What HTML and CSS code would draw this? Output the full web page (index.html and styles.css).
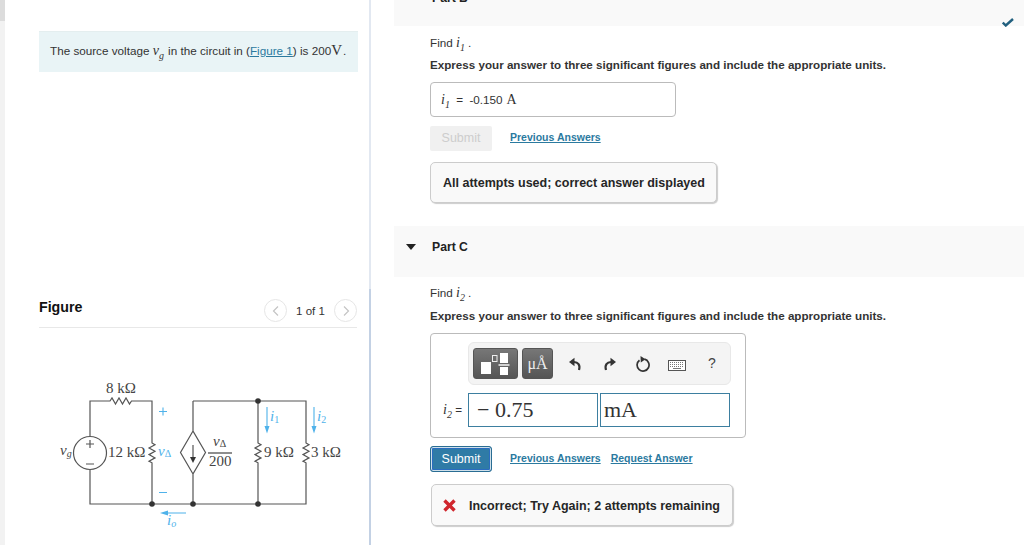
FILE: index.html
```html
<!DOCTYPE html>
<html lang="en">
<head>
<meta charset="utf-8">
<title>Circuit problem</title>
<link rel="stylesheet" href="styles.css">
</head>
<body>
<div class="page">
  <div class="strip"><div class="thumb"></div></div>
  <section class="left">
    <div class="intro">The source voltage <i class="m m-gap">v<sub>g</sub></i> in the circuit in (<a href="#">Figure 1</a>) is 200<span class="mr">V</span>.</div>
    <div class="fig-head">
      <h2>Figure</h2>
      <div class="pager">
        <span class="circle"><svg width="10" height="12" viewBox="0 0 10 12"><path d="M7 1.500 2.500 6 7 10.500" fill="none" stroke="#c4c4c4" stroke-width="1.200"/></svg></span>
        <span class="count">1 of 1</span>
        <span class="circle"><svg width="10" height="12" viewBox="0 0 10 12"><path d="M3 1.500 7.500 6 3 10.500" fill="none" stroke="#c4c4c4" stroke-width="1.200"/></svg></span>
      </div>
    </div>
    <svg class="circuit" width="310" height="175" viewBox="50 370 310 175">
      <g fill="none" stroke="#555" stroke-width="1.200">
        <path d="M90 436V401H110l2-3 3.500 6 3.500-6 3.500 6 3.500-6 3.500 6 2-3H152V443l3 1.700-6 3.300 6 3.300-6 3.300 6 3.300-6 3.300 3 1.600V504H90V470"/>
        <circle cx="90" cy="453" r="16.500"/>
        <path d="M193 401H306V443l3 1.700-6 3.300 6 3.300-6 3.300 6 3.300-6 3.300 3 1.600V504H152"/>
        <path d="M193 401V431L205.500 452.500 193 474V504M193 431 180.500 452.500 193 474"/>
        <path d="M258 401V443l3 1.700-6 3.300 6 3.300-6 3.300 6 3.300-6 3.300 3 1.600V504"/>
        <path d="M193 445V458"/>
        <path d="M208 453H232" stroke="#444"/>
        <path d="M86 444h8M90 440v8M86 464h8"/>
      </g>
      <path d="M190 457h6l-3 6z" fill="#333"/>
      <g fill="#333"><circle cx="152" cy="504" r="2.800"/><circle cx="193" cy="504" r="2.800"/><circle cx="258" cy="401" r="2.800"/><circle cx="258" cy="504" r="2.800"/></g>
      <g stroke="#4fb2ea" stroke-width="1.100" fill="none">
        <path d="M159 411.500h8M163 407.500v8M159 492.500h8M167 513h19M267 407v20M314 407v20"/>
      </g>
      <g fill="#4fb2ea">
        <path d="M160 513l8-2.500v5zM264.500 426h5l-2.500 7.500zM311.500 426h5l-2.500 7.500z"/>
      </g>
      <g class="ck">
        <text x="106" y="393">8 kΩ</text>
        <text x="108" y="457">12 kΩ</text>
        <text x="264" y="457">9 kΩ</text>
        <text x="311" y="457">3 kΩ</text>
        <text x="209" y="466">200</text>
        <text x="60" y="455" font-style="italic">v<tspan class="ck-sub" dy="2">g</tspan></text>
        <text x="213" y="446" font-style="italic">v<tspan class="ck-sub" dy="1" font-style="normal">Δ</tspan></text>
      </g>
      <g class="ck ck-blue">
        <text x="158" y="456" font-style="italic">v<tspan class="ck-sub" dy="1" font-style="normal">Δ</tspan></text>
        <text x="167" y="525" font-style="italic">i<tspan class="ck-sub" dy="2">o</tspan></text>
        <text x="270" y="421" font-style="italic">i<tspan class="ck-sub" dy="2" font-style="normal">1</tspan></text>
        <text x="317" y="421" font-style="italic">i<tspan class="ck-sub" dy="2" font-style="normal">2</tspan></text>
      </g>
    </svg>
  </section>
  <main class="right">
    <div class="band band-cut">
      <span class="caret-space"></span><h3>Part B</h3>
      <svg class="tick" width="12" height="9" viewBox="0 0 12 9"><path d="M.8 4.500l3 3L11 1" fill="none" stroke="#21607f" stroke-width="2.400"/></svg>
    </div>
    <div class="part part-b">
      <p class="find">Find <i class="m">i<sub>1</sub></i> .</p>
      <p class="express">Express your answer to three significant figures and include the appropriate units.</p>
      <div class="given"><i class="m">i<sub>1</sub></i> =  -0.150<span class="mr">A</span></div>
      <div class="actions">
        <span class="btn btn-off">Submit</span>
        <a class="link" href="#">Previous Answers</a>
      </div>
      <div class="note note-plain">All attempts used; correct answer displayed</div>
    </div>
    <div class="band">
      <svg class="caret" width="10" height="6" viewBox="0 0 10 6"><path d="M0 0h10L5 6z" fill="#222"/></svg>
      <h3>Part C</h3>
    </div>
    <div class="part part-c">
      <p class="find">Find <i class="m">i<sub>2</sub></i> .</p>
      <p class="express">Express your answer to three significant figures and include the appropriate units.</p>
      <div class="answer">
        <div class="toolbar">
          <span class="tool tool-wide">
            <svg width="40" height="26" viewBox="0 0 40 26"><g fill="#fff"><rect x="5" y="11" width="10" height="12"/><rect x="24" y="2" width="8" height="10"/><rect x="24" y="16" width="8" height="8"/><rect x="22.500" y="13.300" width="11" height="1.400"/></g><rect x="16.500" y="4.500" width="4.500" height="6" fill="none" stroke="#eee"/></svg>
          </span>
          <span class="tool tool-unit">μÅ</span>
          <svg class="ico ico-undo" width="14" height="14" viewBox="0 0 14 14"><path d="M1 5 6.500 .8V9.200z" fill="#333"/><path d="M6 5C10 5 12.500 8 11 13" fill="none" stroke="#333" stroke-width="2.200"/></svg>
          <svg class="ico ico-redo" width="14" height="14" viewBox="0 0 14 14"><path d="M13 5 7.500 .8V9.200z" fill="#333"/><path d="M8 5C4 5 1.500 8 3 13" fill="none" stroke="#333" stroke-width="2.200"/></svg>
          <svg class="ico ico-reset" width="16" height="16" viewBox="0 0 16 16"><path d="M9.500 3.200A6 6 0 1 1 4.500 4.200" fill="none" stroke="#333" stroke-width="1.700"/><path d="M5.500 0 10.500 3.300 5.800 6.500z" fill="#333"/></svg>
          <svg class="ico ico-keys" width="18" height="11" viewBox="0 0 18 11"><rect x=".5" y=".5" width="17" height="10" fill="#fff" stroke="#555"/><path d="M2 2.500h14M2 4.500h14M2 6.500h14" stroke="#777" stroke-dasharray="1 1"/><path d="M5 8.500h8" stroke="#777"/></svg>
          <span class="ico-help">?</span>
        </div>
        <div class="inputs">
          <span class="eq"><i class="m">i<sub>2</sub></i> =</span>
          <span class="field field-num">− 0.75</span>
          <span class="field">mA</span>
        </div>
      </div>
      <div class="actions actions-c">
        <span class="btn btn-on">Submit</span>
        <a class="link" href="#">Previous Answers</a>
        <a class="link" href="#">Request Answer</a>
      </div>
      <div class="note note-err">
        <svg width="13" height="13" viewBox="0 0 13 13"><path d="M1.500 1.500l10 10M11.500 1.500l-10 10" stroke="#d0262d" stroke-width="3.400"/></svg>
        <span>Incorrect; Try Again; 2 attempts remaining</span>
      </div>
    </div>
  </main>
</div>
</body>
</html>
```
FILE: styles.css
```css
* { box-sizing: border-box; }
html, body { margin: 0; padding: 0; background: #fff; }
body { font-family: "Liberation Sans", Arial, sans-serif; font-size: 11.700px; color: #333; }
.page { display: flex; width: 1024px; height: 545px; overflow: hidden; }
.strip { width: 5px; background: #f2f2f2; flex: none; }
.thumb { height: 21px; background: #dcdcdc; }
.left { width: 366px; flex: none; border-right: 2px solid #cfdbe9; border-image: linear-gradient(#e2e8f1 53%, #c3d1e4 53%) 1; padding: 31px 12px 0 34px; }
.intro { height: 41px; margin-right: -1px; background: #e9f4f6; border-top: 1px solid #e4eeef; padding: 10px 0 0 11px; line-height: 17px; white-space: nowrap; }
.intro a { color: #2b7a9f; }
.m { font-family: "Liberation Serif", serif; font-style: italic; font-size: 14px; }
.m sub { font-size: 10px; line-height: 0; }
.m-gap { margin-right: 1px; }
.mr { font-family: "Liberation Serif", serif; font-size: 15px; margin-right: 1px; }
.fig-head { display: flex; justify-content: space-between; align-items: center; height: 46px; margin: 210px 0 0 0; border-bottom: 1px solid #e8e8e8; padding-top: 12px; }
.fig-head h2 { margin: 0 0 8px; font-size: 14.200px; font-weight: bold; color: #111; }
.pager { display: flex; align-items: center; gap: 9px; font-size: 11.500px; }
.circle { display: flex; align-items: center; justify-content: center; width: 23px; height: 23px; border: 1px solid #e6e6e6; border-radius: 50%; }
.count { width: 29px; text-align: center; margin-top: 1px; white-space: nowrap; }
.circuit { display: block; margin: 42px 0 0 11px; }
.ck { font-family: "Liberation Serif", serif; font-size: 15px; fill: #444; }
.ck-blue { fill: #4fb2ea; }
.ck-sub { font-size: 10px; }
.right { flex: 1; padding-left: 23px; min-width: 0; }
.band { position: relative; display: flex; align-items: flex-start; height: 51px; background: #f9f9f9; padding-top: 14px; }
.band-cut { margin-top: -25px; padding-top: 16px; }
.band h3 { margin: 0; font-size: 12.200px; font-weight: bold; color: #222; line-height: 14px; }
.caret { margin: 4px 16px 0 12px; }
.caret-space { width: 38px; }
.tick { position: absolute; right: 10px; bottom: -1px; }
.part { padding-left: 36px; }
.find { margin: 0; line-height: 16px; }
.part-b { padding-top: 9px; height: 200px; }
.part-c { padding-top: 8px; }
.express { margin: 7px 0 0; font-weight: bold; font-size: 11.630px; line-height: 14px; color: #333; white-space: nowrap; }
.part-c .express { margin-top: 8px; }
.given { display: flex; align-items: center; width: 246px; height: 35px; margin-top: 10px; border: 1px solid #bbb; border-radius: 4px; padding-left: 10px; white-space: pre; }
.given .m { margin-right: 3px; }
.given .mr { font-size: 14px; margin-left: 4px; }
.actions { display: flex; align-items: center; gap: 18px; margin-top: 8px; height: 26px; }
.btn { display: flex; align-items: center; justify-content: center; width: 62px; height: 26px; border-radius: 2px; font-size: 12.500px; }
.btn-off { background: #f0f0f0; color: #cdcdcd; height: 25px; }
.btn-on { background: #2f7ba6; color: #fff; border: 1px solid #2a6d93; box-shadow: inset 0 0 0 1px #cfe0ea, inset 0 0 0 2px #2a6cc0; border-radius: 3px; }
.link { font-size: 10.500px; font-weight: bold; color: #2b7a9f; margin-bottom: 2px; }
.actions-c .link + .link { margin-left: -8px; }
.note { display: flex; align-items: center; border: 1px solid #ccc; border-radius: 5px; background: #f9f9f9; box-shadow: 1px 1px 1px #ccc; font-weight: bold; font-size: 12.500px; color: #262626; }
.note-plain { width: 287px; height: 41px; margin-top: 11px; padding-left: 12px; }
.note-err { width: 302px; height: 42px; margin: 12px 0 0 1px; padding: 1px 0 0 11px; gap: 13px; }
.answer { width: 316px; height: 105px; margin-top: 10px; border: 1px solid #bbb; border-radius: 4px; padding: 8px 15px 0 37px; }
.toolbar { display: flex; align-items: center; height: 43px; margin-right: -1px; padding-left: 4px; gap: 4px; background: #f4f4f4; border: 1px solid #e8e8e8; border-radius: 6px; }
.tool { display: flex; align-items: center; justify-content: center; height: 31px; border-radius: 3px; background: linear-gradient(#777, #555); border: 1px solid #555; color: #eee; }
.tool-wide { width: 45px; }
.tool-unit { width: 31px; font-family: "Liberation Serif", serif; font-size: 16px; }
.ico { flex: none; }
.ico-undo { margin-left: 11px; }
.ico-redo { margin-left: 17px; }
.ico-reset { margin-left: 14px; }
.ico-keys { margin-left: 13px; margin-top: 3px; }
.ico-help { margin-left: 18px; font-size: 14px; color: #444; margin-top: -1px; }
.inputs { display: flex; align-items: center; gap: 2px; margin: 8px 0 0 -29px; height: 34px; }
.eq { width: 27px; flex: none; padding-right: 4px; text-align: right; white-space: nowrap; }
.field { display: flex; align-items: center; flex: none; width: 130px; height: 34px; padding: 0 0 0 3px; border: 1px solid #3d7fa0; font-family: "Liberation Serif", serif; font-size: 22px; color: #333; white-space: pre; }
.field-num { padding-left: 8px; }
```
